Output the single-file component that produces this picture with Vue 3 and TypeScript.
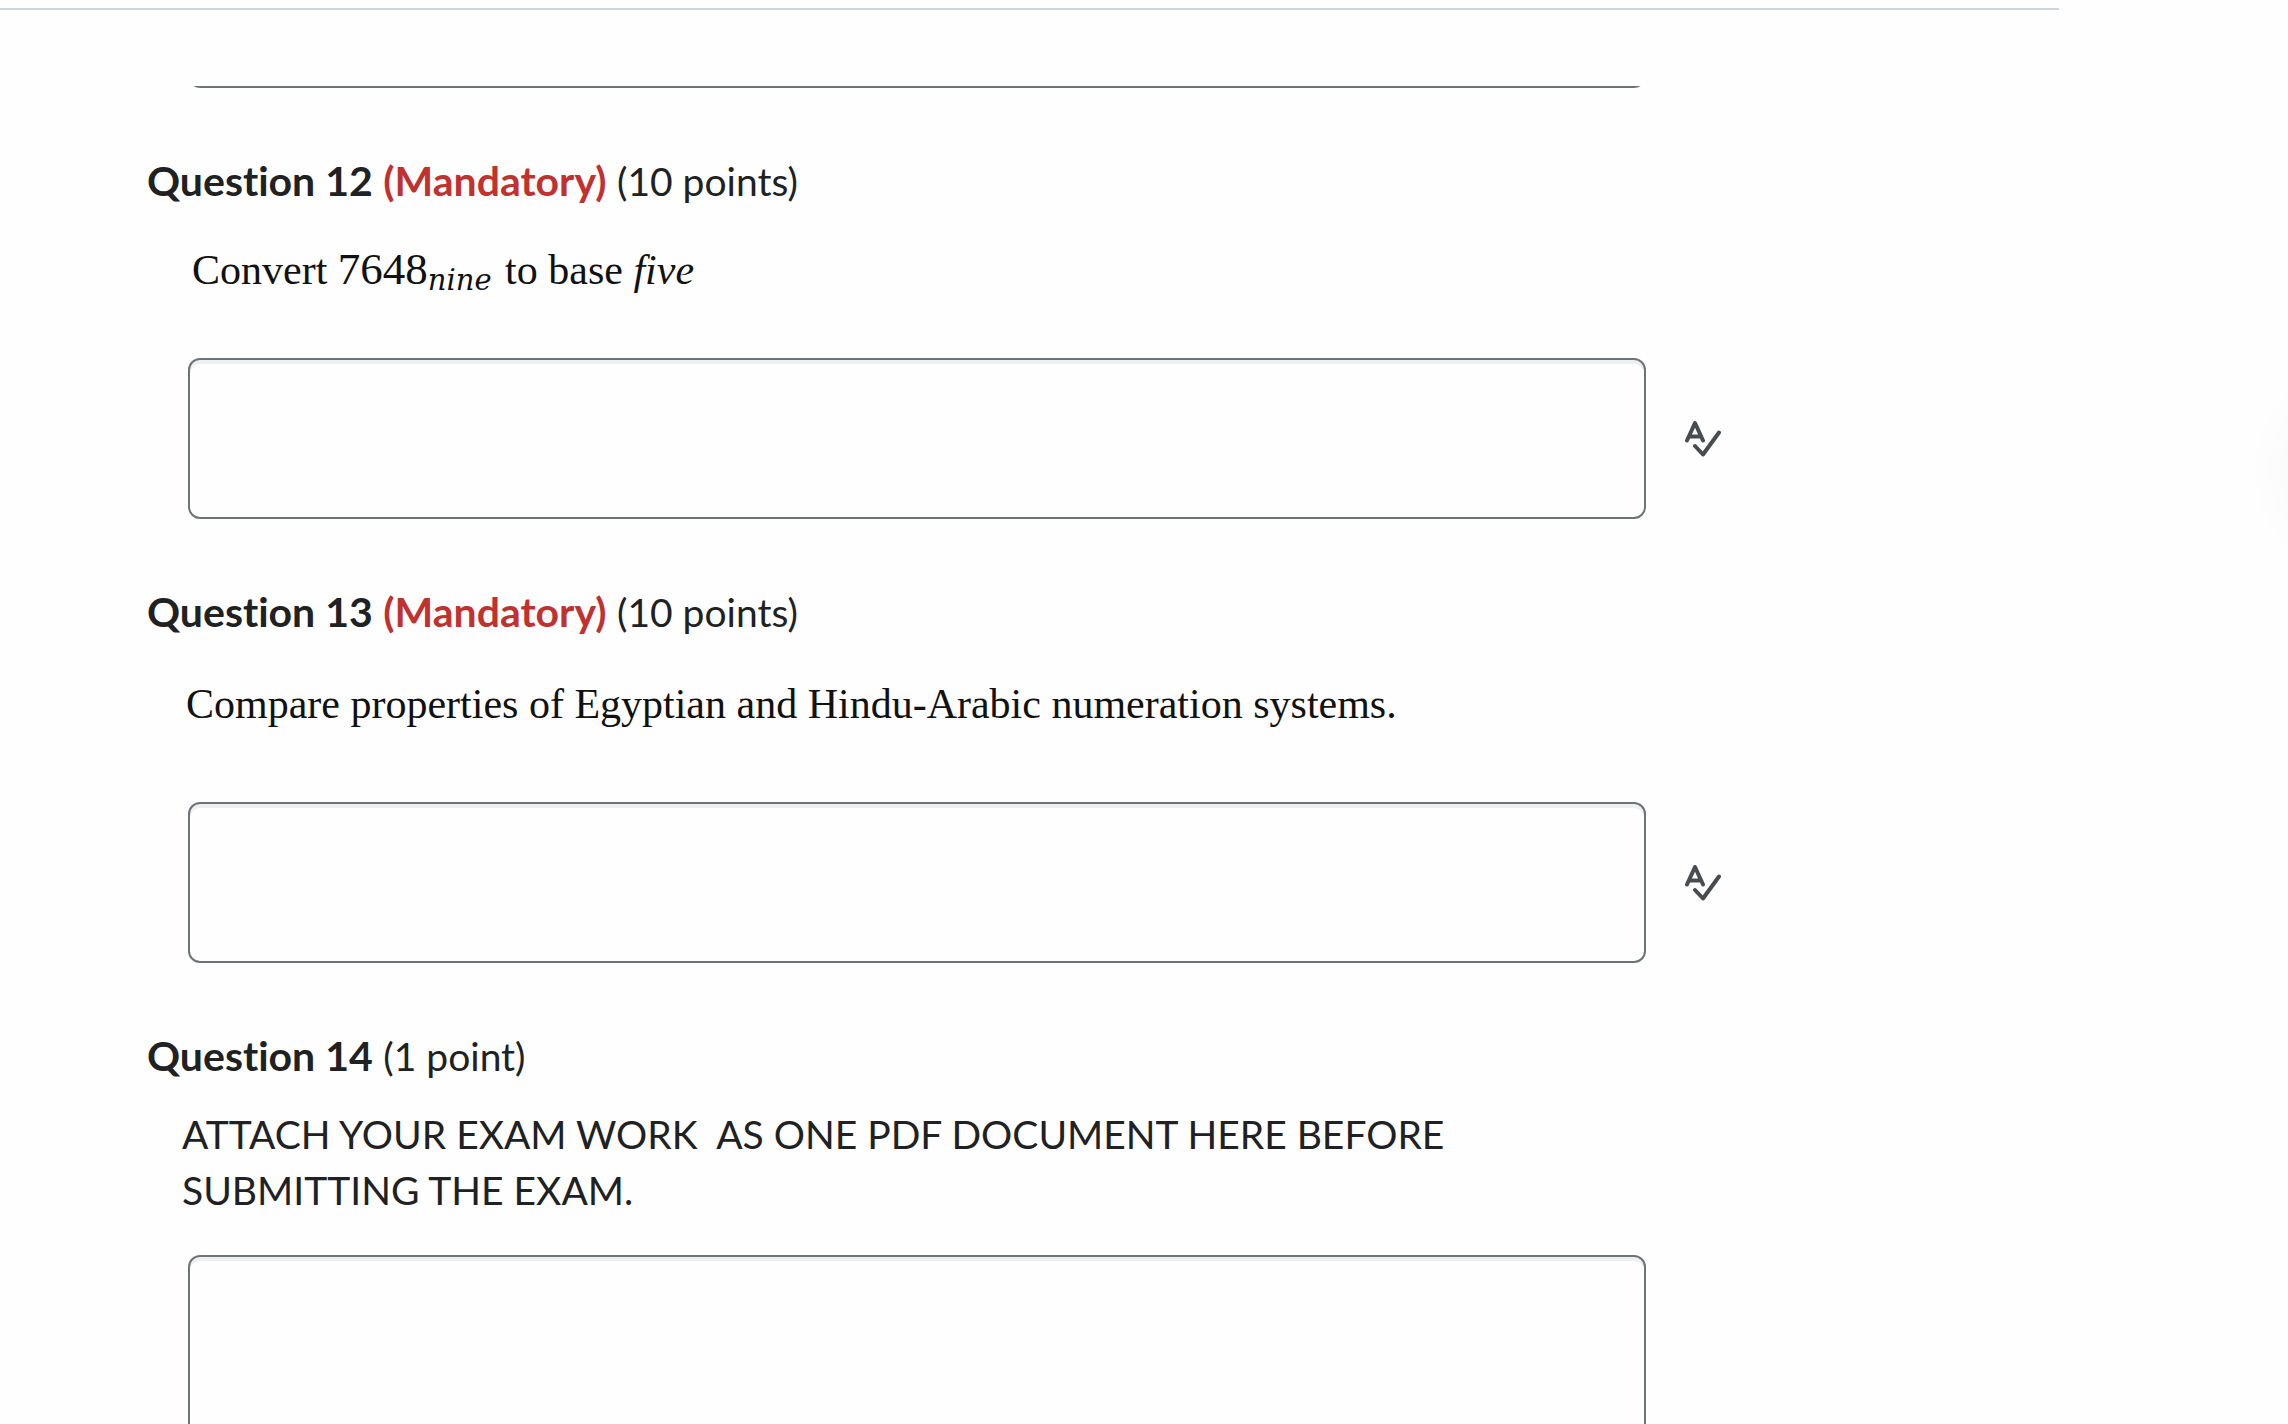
<script setup lang="ts">
import { ref } from 'vue'

interface Question {
  id: number
  mandatory: boolean
  points: string
  kind: 'convert' | 'compare' | 'attach'
}

const questions: Question[] = [
  { id: 12, mandatory: true, points: '(10 points)', kind: 'convert' },
  { id: 13, mandatory: true, points: '(10 points)', kind: 'compare' },
  { id: 14, mandatory: false, points: '(1 point)', kind: 'attach' },
]

const answers = ref<Record<number, string>>({ 11: '', 12: '', 13: '', 14: '' })
</script>

<template>
  <div class="page">
    <main class="quiz">
      <div class="row previous">
        <textarea v-model="answers[11]" class="answer" aria-label="Question 11"></textarea>
      </div>

      <section v-for="q in questions" :key="q.id" class="question" :class="q.kind">
        <h2 class="heading">
          <label :for="`answer-${q.id}`">
            <strong>Question {{ q.id }}</strong>{{ ' ' }}<strong v-if="q.mandatory" class="mandatory">(Mandatory)</strong>{{ q.mandatory ? ' ' : '' }}<span class="points">{{ q.points }}</span>
          </label>
        </h2>

        <p v-if="q.kind === 'convert'" class="prompt serif">Convert <span class="number">7648</span><span class="base">nine</span> to base <i>five</i></p>
        <p v-else-if="q.kind === 'compare'" class="prompt serif">Compare properties of Egyptian and Hindu-Arabic numeration systems.</p>
        <p v-else class="prompt">ATTACH YOUR EXAM WORK&nbsp; AS ONE PDF DOCUMENT HERE BEFORE SUBMITTING THE EXAM.</p>

        <div class="row">
          <textarea :id="`answer-${q.id}`" v-model="answers[q.id]" class="answer"></textarea>
          <button type="button" class="spell" aria-label="Check spelling">
            <svg viewBox="0 0 36 36" width="36" height="36" aria-hidden="true">
              <path d="M2 19.500 L10 2 L18 19.500 M4 15.500 H16" />
              <path d="M10 25 L18 33.500 L34 11.500" />
            </svg>
          </button>
        </div>
      </section>
    </main>
    <div class="floating" aria-hidden="true"></div>
  </div>
</template>

<style>
body {
  background: #fefefe;
}
</style>

<style scoped>
.page {
  height: 100vh;
  overflow: hidden;
  padding-top: 8px;
  box-sizing: border-box;
  background: #fefefe;
  color: #202122;
  font-family: Lato, sans-serif;
  font-variant-ligatures: no-common-ligatures;
}

.quiz {
  box-sizing: border-box;
  width: 90%;
  padding: 76px 338px 0 147px;
  border-top: 2px solid #cfd4d9;
}

.row {
  display: flex;
  align-items: center;
  gap: 39px;
  padding-left: 41px;
}

.previous {
  height: 2px;
  overflow: hidden;
  align-items: flex-end;
  padding-right: 75px;
}

.answer {
  flex: 1;
  min-width: 0;
  height: 161px;
  box-sizing: border-box;
  margin: 0;
  padding: 16px;
  border: 2px solid #6e7376;
  border-radius: 12px;
  background: transparent;
  box-shadow: inset 0 4px 0 #eeeff1;
  color: inherit;
  font: inherit;
  font-size: 39px;
  resize: none;
  outline: none;
}

.previous .answer {
  flex-shrink: 0;
}

.spell {
  display: flex;
  padding: 0;
  border: 0;
  background: none;
  cursor: pointer;
}

.spell path {
  fill: none;
  stroke: #494c4e;
  stroke-width: 4;
  stroke-linecap: round;
  stroke-linejoin: round;
}

.heading {
  margin: 0;
  padding-top: 69px;
  font-size: 41px;
  line-height: 48px;
  font-weight: 400;
}

.mandatory {
  color: #c0322f;
}

.points {
  font-size: 39px;
}

.prompt {
  margin: 26px 75px 37px 35px;
  font-size: 39px;
  line-height: 56px;
}

.serif {
  font-family: 'Liberation Serif', serif;
  font-size: 42px;
  line-height: 48px;
  color: #111;
}

.convert .prompt {
  height: 48px;
  margin: 40px 75px 65px 45px;
}

.compare .prompt {
  margin: 44px 75px 74px 39px;
}

.number {
  font-size: 45px;
}

.base {
  position: relative;
  top: 6px;
  margin-right: 3px;
  font-family: 'DejaVu Serif', serif;
  font-style: italic;
  font-size: 29px;
  line-height: 1;
}

.attach .answer {
  height: 400px;
}

.floating {
  position: fixed;
  top: 400px;
  right: -142px;
  width: 140px;
  height: 140px;
  border-radius: 50%;
  box-shadow: 0 0 64px rgba(0, 0, 0, 0.04);
}
</style>
